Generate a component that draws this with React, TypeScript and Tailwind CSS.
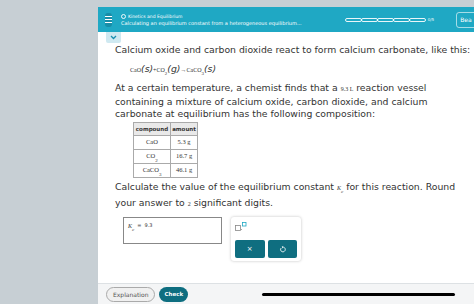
import React from 'react';

const serif = "font-['Liberation_Serif',serif]";

const Sub = ({ children }: { children: React.ReactNode }) => (
  <sub className="text-[5px] align-[-2px]">{children}</sub>
);

const ProgressBar = () => (
  <div className="flex items-center">
    {[0, 1, 2, 3, 4].map((i) => (
      <div key={i} className="w-[17px] h-[4px] rounded-full border border-white/90 -ml-[1px] first:ml-0" />
    ))}
    <span className="ml-[2px] text-[4px] text-white/90">0/5</span>
  </div>
);

const App: React.FC = () => {
  return (
    <div className="w-[474px] h-[304px] flex bg-[#c7cfd4] overflow-hidden font-['DejaVu_Sans',sans-serif] text-[#333]">
      <div className="w-[98px] shrink-0" />
      <div className="flex-1 flex flex-col min-w-0">
        <div className="h-[7px] shrink-0" />
        {/* header */}
        <div className="h-[25px] shrink-0 bg-[#1fa8c4] flex items-center pl-[7px] whitespace-nowrap overflow-hidden">
          <div className="w-[13px] h-[14px] rounded-[3px] bg-[#178da8] flex flex-col items-center justify-center gap-[2px]">
            <div className="w-[7px] h-[1px] bg-white" />
            <div className="w-[7px] h-[1px] bg-white" />
            <div className="w-[7px] h-[1px] bg-white" />
          </div>
          <div className="ml-[9px] flex flex-col leading-[7px] text-white">
            <div className="flex items-center gap-[2px] text-[4.5px]">
              <span className="w-[5px] h-[5px] rounded-full border border-white/90" />
              Kinetics and Equilibrium
            </div>
            <div className="text-[5px]">Calculating an equilibrium constant from a heterogeneous equilibrium...</div>
          </div>
          <div className="ml-[43px]">
            <ProgressBar />
          </div>
          <div className="ml-[22px] shrink-0 h-[16px] pl-[3px] pr-[10px] border border-white/60 rounded-[3px] text-[6px] text-white flex items-center">
            Bea
          </div>
        </div>
        {/* content */}
        <div className="flex-1 bg-white relative whitespace-nowrap">
          <div className="absolute left-[8px] top-0 w-[15px] h-[11px] bg-[#cfe9f1] rounded-b-[2px] flex items-center justify-center">
            <svg width="7" height="5" viewBox="0 0 7 5">
              <path d="M1 1l2.5 2.5L6 1" fill="none" stroke="#1a8fb0" strokeWidth="1.3" />
            </svg>
          </div>
          <div className="pl-[17px] pt-[12px] text-[9.3px] leading-[12.5px]">
            <p>Calcium oxide and carbon dioxide react to form calcium carbonate, like this:</p>
            <p className="mt-[6px] pl-[15px] flex items-baseline">
              <span className={`${serif} text-[6px]`}>CaO</span>
              <span className="italic">(s)</span>
              <span className={`${serif} text-[6px]`}>+CO<Sub>2</Sub></span>
              <span className="italic">(g)</span>
              <span className={`${serif} text-[6px]`}>→CaCO<Sub>3</Sub></span>
              <span className="italic">(s)</span>
            </p>
            <p className="mt-[6px]">
              At a certain temperature, a chemist finds that a <span className={`${serif} text-[6px]`}>9.3 L</span> reaction vessel
              <br />
              containing a mixture of calcium oxide, carbon dioxide, and calcium
              <br />
              carbonate at equilibrium has the following composition:
            </p>
            <table className={`ml-[18px] mt-[1px] border-collapse border border-[#999] ${serif} text-[6.5px] text-center`}>
              <thead>
                <tr className="bg-[#e9e9e9] h-[12px]">
                  <th className="border border-[#aaa] w-[37px] px-0 font-bold font-['DejaVu_Sans',sans-serif] text-[5.5px]">compound</th>
                  <th className="border border-[#aaa] w-[27px] px-0 font-bold font-['DejaVu_Sans',sans-serif] text-[5.5px]">amount</th>
                </tr>
              </thead>
              <tbody>
                <tr className="h-[14px]">
                  <td className="border border-[#aaa]">CaO</td>
                  <td className="border border-[#aaa]">5.3 g</td>
                </tr>
                <tr className="h-[14px]">
                  <td className="border border-[#aaa]">CO<Sub>2</Sub></td>
                  <td className="border border-[#aaa]">16.7 g</td>
                </tr>
                <tr className="h-[14px]">
                  <td className="border border-[#aaa]">CaCO<Sub>3</Sub></td>
                  <td className="border border-[#aaa]">46.1 g</td>
                </tr>
              </tbody>
            </table>
            <p className="mt-[2px] leading-[14.5px]">
              Calculate the value of the equilibrium constant <span className={`${serif} italic text-[6px]`}>K<Sub>c</Sub></span> for this reaction. Round
              <br />
              your answer to <span className={`${serif} text-[6px]`}>2</span> significant digits.
            </p>
          </div>
          <div className="flex items-start mt-[6px] pl-[25px]">
            <div className="w-[99px] h-[27px] border border-[#888] px-[4px] pt-[4px] text-[5px] flex items-start gap-[3px]">
              <span className={`${serif} italic text-[6px]`}>K<Sub>c</Sub></span>
              <span>=</span>
              <span>9.3</span>
            </div>
            <div className="ml-[9px] w-[70px] h-[44px] rounded-[3px] shadow-[0_0_3px_rgba(0,0,0,0.25)] px-[4px] pt-[5px] flex flex-col">
              <svg width="12" height="9" viewBox="0 0 12 9">
                <rect x="0.5" y="3.5" width="5" height="5" fill="none" stroke="#888" strokeWidth="0.8" />
                <rect x="7.5" y="0.5" width="3.5" height="3.5" fill="none" stroke="#1fa8c4" strokeWidth="0.8" />
                <circle cx="6.5" cy="7.5" r="0.5" fill="#888" />
              </svg>
              <div className="mt-[9px] flex gap-[3px]">
                <div className="w-[32px] h-[18px] rounded-[2px] bg-[#0f6e80] flex items-center justify-center text-white text-[7px]">×</div>
                <div className="w-[32px] h-[18px] rounded-[2px] bg-[#0f6e80] flex items-center justify-center">
                  <svg width="7" height="7" viewBox="0 0 8 8">
                    <path d="M2.2 2.5A2.7 2.7 0 1 0 4 1.3" fill="none" stroke="white" strokeWidth="1" />
                    <path d="M3.2 0.2L4.6 1.4 3.2 2.6" fill="none" stroke="white" strokeWidth="0.9" />
                  </svg>
                </div>
              </div>
            </div>
          </div>
        </div>
        {/* footer */}
        <div className="h-[21px] shrink-0 bg-[#f4f5f6] border-t border-[#dde1e4] flex items-center pl-[8px]">
          <div className="h-[15px] px-[6px] rounded-full border border-[#aaa] bg-[#f0f0f0] text-[6px] text-[#555] flex items-center">
            Explanation
          </div>
          <div className="ml-[4px] h-[15px] px-[5px] rounded-full bg-[#0e6e80] text-[5.5px] text-white font-bold flex items-center">
            Check
          </div>
          <div className="ml-[74px] w-[193px] h-[3px] rounded-full bg-black" />
        </div>
      </div>
    </div>
  );
};

export default App;
